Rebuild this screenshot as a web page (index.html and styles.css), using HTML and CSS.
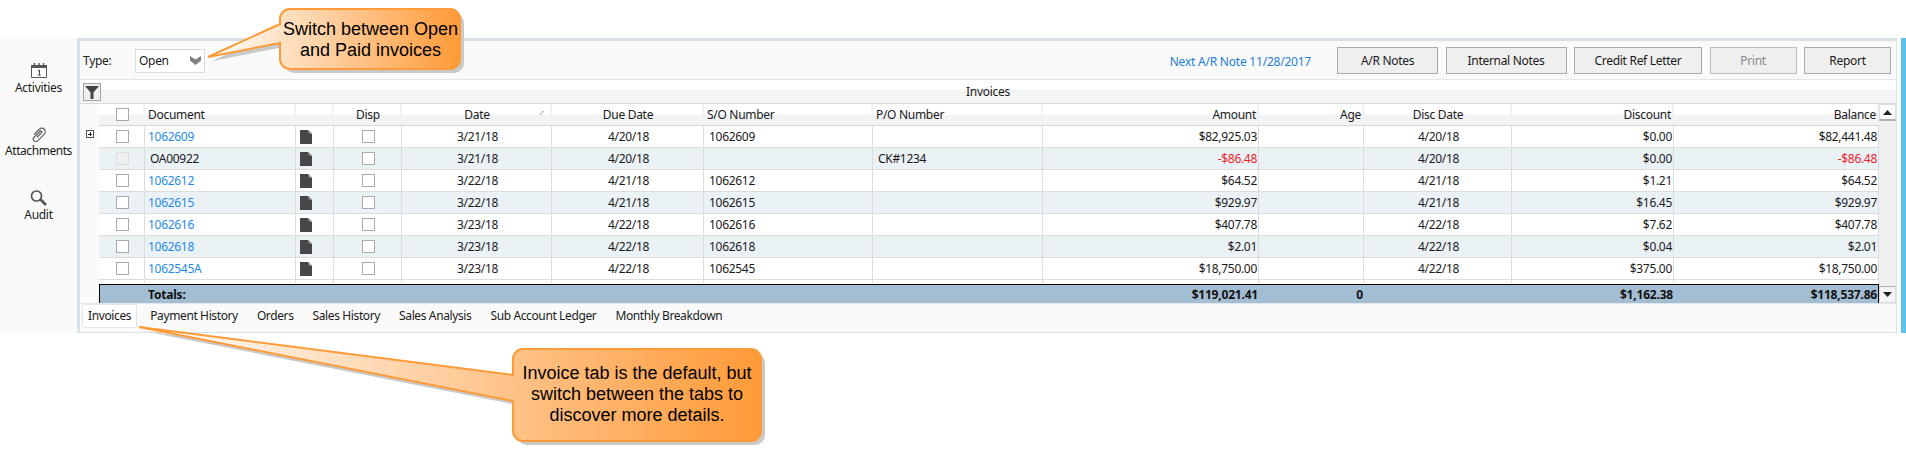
FILE: index.html
```html
<!DOCTYPE html>
<html lang="en">
<head>
<meta charset="utf-8">
<title>Invoices</title>
<link rel="stylesheet" href="styles.css">
</head>
<body>
<div class="app">
  <nav class="sidebar">
    <div class="side-item side-activities">
      <svg class="side-icon" width="18" height="17" viewBox="0 0 18 17"><path d="M1.500 3.500h15v12h-15z" fill="#fff" stroke="#555"/><path d="M1 3h16v3H1z" fill="#555"/><path d="M4.500 1v3M9 1v3M13.500 1v3" stroke="#555" stroke-width="1.400"/><path d="M8 9l1.500-1v5M7.800 13h3" fill="none" stroke="#444"/></svg>
      <span>Activities</span>
    </div>
    <div class="side-item">
      <svg class="side-icon" width="16" height="15" viewBox="0 0 16 15"><g transform="rotate(45 8 7.500)" fill="none" stroke="#666" stroke-width="1.300"><path d="M4.500 11V3.500a3.500 3.500 0 0 1 7 0V13a2.500 2.500 0 0 1-5 0V4.500a1 1 0 0 1 2 0V11"/></g></svg>
      <span class="side-attach">Attachments</span>
    </div>
    <div class="side-item">
      <svg class="side-icon" width="17" height="16" viewBox="0 0 17 16"><circle cx="6.500" cy="6" r="5" fill="none" stroke="#555" stroke-width="1.700"/><path d="M10.500 9.500 16 15" stroke="#555" stroke-width="2.600"/></svg>
      <span>Audit</span>
    </div>
  </nav>
  <main class="frame">
    <header class="toolbar">
      <label class="type-label">Type:</label>
      <div class="select">
        <span>Open</span>
        <svg width="11" height="9" viewBox="0 0 11 9"><path d="M0 0l5.500 3.500L11 0v4.500L5.500 9 0 4.500z" fill="#7f7f7f"/></svg>
      </div>
      <a class="next-note">Next A/R Note 11/28/2017</a>
      <div class="buttons">
        <button class="btn btn-ar">A/R Notes</button>
        <button class="btn btn-int">Internal Notes</button>
        <button class="btn btn-credit">Credit Ref Letter</button>
        <button class="btn btn-print" disabled>Print</button>
        <button class="btn btn-report">Report</button>
      </div>
    </header>
    <div class="titlebar">
      <button class="filter"><svg width="14" height="13" viewBox="0 0 14 13"><path d="M0 0h14L8.500 6.500V13h-3V6.500z" fill="#444"/></svg></button>
      <span class="title">Invoices</span>
    </div>
    <div class="grid-wrap">
      <div class="gutter"><span class="expander"></span></div>
      <div class="grid">
        <div class="cols head">
          <div class="c-center"><i class="check"></i></div><div>Document</div><div></div><div class="c-center">Disp</div><div class="c-center sort">Date<i class="sort-mark"></i></div><div class="c-center">Due Date</div><div>S/O Number</div><div>P/O Number</div><div class="c-right">Amount</div><div class="c-right">Age</div><div class="c-center">Disc Date</div><div class="c-right">Discount</div><div class="c-right">Balance</div>
        </div>
        <div class="cols row">
          <div class="c-center"><i class="check"></i></div><div><a class="link">1062609</a></div><div class="c-icon"><svg class="doc" width="12" height="14" viewBox="0 0 12 14"><path d="M0 0h8l4 4v10H0z" fill="#474747"/><path d="M8.500 0 12 3.500H8.500z" fill="#999"/></svg></div><div class="c-center"><i class="check"></i></div><div class="c-center">3/21/18</div><div class="c-center">4/20/18</div><div class="c-pad">1062609</div><div></div><div class="c-right">$82,925.03</div><div></div><div class="c-center">4/20/18</div><div class="c-right">$0.00</div><div class="c-right">$82,441.48</div>
        </div>
        <div class="cols row alt">
          <div class="c-center"><i class="check disabled"></i></div><div class="c-pad">OA00922</div><div class="c-icon"><svg class="doc" width="12" height="14" viewBox="0 0 12 14"><path d="M0 0h8l4 4v10H0z" fill="#474747"/><path d="M8.500 0 12 3.500H8.500z" fill="#999"/></svg></div><div class="c-center"><i class="check"></i></div><div class="c-center">3/21/18</div><div class="c-center">4/20/18</div><div></div><div class="c-pad">CK#1234</div><div class="c-right neg">-$86.48</div><div></div><div class="c-center">4/20/18</div><div class="c-right">$0.00</div><div class="c-right neg">-$86.48</div>
        </div>
        <div class="cols row">
          <div class="c-center"><i class="check"></i></div><div><a class="link">1062612</a></div><div class="c-icon"><svg class="doc" width="12" height="14" viewBox="0 0 12 14"><path d="M0 0h8l4 4v10H0z" fill="#474747"/><path d="M8.500 0 12 3.500H8.500z" fill="#999"/></svg></div><div class="c-center"><i class="check"></i></div><div class="c-center">3/22/18</div><div class="c-center">4/21/18</div><div class="c-pad">1062612</div><div></div><div class="c-right">$64.52</div><div></div><div class="c-center">4/21/18</div><div class="c-right">$1.21</div><div class="c-right">$64.52</div>
        </div>
        <div class="cols row alt">
          <div class="c-center"><i class="check"></i></div><div><a class="link">1062615</a></div><div class="c-icon"><svg class="doc" width="12" height="14" viewBox="0 0 12 14"><path d="M0 0h8l4 4v10H0z" fill="#474747"/><path d="M8.500 0 12 3.500H8.500z" fill="#999"/></svg></div><div class="c-center"><i class="check"></i></div><div class="c-center">3/22/18</div><div class="c-center">4/21/18</div><div class="c-pad">1062615</div><div></div><div class="c-right">$929.97</div><div></div><div class="c-center">4/21/18</div><div class="c-right">$16.45</div><div class="c-right">$929.97</div>
        </div>
        <div class="cols row">
          <div class="c-center"><i class="check"></i></div><div><a class="link">1062616</a></div><div class="c-icon"><svg class="doc" width="12" height="14" viewBox="0 0 12 14"><path d="M0 0h8l4 4v10H0z" fill="#474747"/><path d="M8.500 0 12 3.500H8.500z" fill="#999"/></svg></div><div class="c-center"><i class="check"></i></div><div class="c-center">3/23/18</div><div class="c-center">4/22/18</div><div class="c-pad">1062616</div><div></div><div class="c-right">$407.78</div><div></div><div class="c-center">4/22/18</div><div class="c-right">$7.62</div><div class="c-right">$407.78</div>
        </div>
        <div class="cols row alt">
          <div class="c-center"><i class="check"></i></div><div><a class="link">1062618</a></div><div class="c-icon"><svg class="doc" width="12" height="14" viewBox="0 0 12 14"><path d="M0 0h8l4 4v10H0z" fill="#474747"/><path d="M8.500 0 12 3.500H8.500z" fill="#999"/></svg></div><div class="c-center"><i class="check"></i></div><div class="c-center">3/23/18</div><div class="c-center">4/22/18</div><div class="c-pad">1062618</div><div></div><div class="c-right">$2.01</div><div></div><div class="c-center">4/22/18</div><div class="c-right">$0.04</div><div class="c-right">$2.01</div>
        </div>
        <div class="cols row">
          <div class="c-center"><i class="check"></i></div><div><a class="link">1062545A</a></div><div class="c-icon"><svg class="doc" width="12" height="14" viewBox="0 0 12 14"><path d="M0 0h8l4 4v10H0z" fill="#474747"/><path d="M8.500 0 12 3.500H8.500z" fill="#999"/></svg></div><div class="c-center"><i class="check"></i></div><div class="c-center">3/23/18</div><div class="c-center">4/22/18</div><div class="c-pad">1062545</div><div></div><div class="c-right">$18,750.00</div><div></div><div class="c-center">4/22/18</div><div class="c-right">$375.00</div><div class="c-right">$18,750.00</div>
        </div>
        <div class="cols stub"><div></div><div></div><div></div><div></div><div></div><div></div><div></div><div></div><div></div><div></div><div></div><div></div><div></div></div>
        <div class="cols totals">
          <div></div><div>Totals:</div><div></div><div></div><div></div><div></div><div></div><div></div><div class="c-right">$119,021.41</div><div class="c-right">0</div><div></div><div class="c-right">$1,162.38</div><div class="c-right">$118,537.86</div>
        </div>
      </div>
      <div class="scrollbar">
        <div class="sb-btn sb-up"><svg width="9" height="5" viewBox="0 0 9 5"><path d="M0 5h9L4.500 0z" fill="#222"/></svg></div>
        <div class="sb-track"></div>
        <div class="sb-btn sb-down"><svg width="9" height="5" viewBox="0 0 9 5"><path d="M0 0h9L4.500 5z" fill="#222"/></svg></div>
      </div>
    </div>
    <div class="tabs">
      <div class="tab active">Invoices</div>
      <div class="tab">Payment History</div>
      <div class="tab">Orders</div>
      <div class="tab">Sales History</div>
      <div class="tab">Sales Analysis</div>
      <div class="tab">Sub Account Ledger</div>
      <div class="tab">Monthly Breakdown</div>
    </div>
  </main>
  <div class="edge"></div>
</div>

<div class="callout callout-type">
  <svg width="262" height="68" viewBox="0 0 262 68">
    <defs><linearGradient id="fillA" x1="0" x2="1" y1="0" y2="0"><stop offset="0" stop-color="#fff"/><stop offset="1" stop-color="#ff9a38"/></linearGradient></defs>
    <path class="shadow" transform="translate(4 4)" d="M1 49 73 16V11a10 10 0 0 1 10-10h160a10 10 0 0 1 10 10v40a10 10 0 0 1-10 10H83a10 10 0 0 1-10-10V35z"/>
    <path d="M1 49 73 16V11a10 10 0 0 1 10-10h160a10 10 0 0 1 10 10v40a10 10 0 0 1-10 10H83a10 10 0 0 1-10-10V35z" fill="url(#fillA)" stroke="#ff9a38" stroke-width="2"/>
  </svg>
  <p class="callout-text">Switch between Open<br>and Paid invoices</p>
</div>

<div class="callout callout-tabs">
  <svg width="632" height="122" viewBox="0 0 632 122">
    <defs><linearGradient id="fillB" x1="0" x2="1" y1="0" y2="0"><stop offset="0" stop-color="#fff"/><stop offset="1" stop-color="#ff9a38"/></linearGradient></defs>
    <path class="shadow" transform="translate(4 4)" d="M1 1 375 49V33a10 10 0 0 1 10-10h228a10 10 0 0 1 10 10v72a10 10 0 0 1-10 10H385a10 10 0 0 1-10-10V75z"/>
    <path d="M1 1 375 49V33a10 10 0 0 1 10-10h228a10 10 0 0 1 10 10v72a10 10 0 0 1-10 10H385a10 10 0 0 1-10-10V75z" fill="url(#fillB)" stroke="#ff9a38" stroke-width="2"/>
  </svg>
  <p class="callout-text">Invoice tab is the default, but<br>switch between the tabs to<br>discover more details.</p>
</div>
</body>
</html>
```
FILE: styles.css
```css
* { box-sizing: border-box; }
html, body { margin: 0; padding: 0; background: #fff; }
body {
  position: relative;
  width: 1906px;
  height: 454px;
  overflow: hidden;
  padding-top: 38px;
  font-family: "Noto Sans", "Open Sans", sans-serif;
  font-size: 12px;
  letter-spacing: -0.3px;
  color: #1a1a1a;
}
.app { display: flex; height: 295px; }
.sidebar {
  width: 77px;
  background: #fafafa;
  display: flex;
  flex-direction: column;
  align-items: center;
  padding-top: 24px;
  gap: 31px;
}
.side-item { display: flex; flex-direction: column; align-items: center; gap: 1px; line-height: 16px; width: 77px; }
.side-item span { display: block; }
.side-attach { letter-spacing: -0.45px; }
.side-icon { display: block; }
.frame {
  flex: 0 0 1820px;
  border: 3px solid #d9e1e8;
  border-width: 3px 1px 1px 3px;
  background: #fafafa;
  display: flex;
  flex-direction: column;
}
.edge { flex: 0 0 5px; margin-left: 4px; background: #5cc3ea; }
.toolbar {
  height: 39px;
  display: flex;
  align-items: center;
  padding: 0 5px 0 3px;
  border-bottom: 1px solid #e0e5e9;
  background: #fafafa;
}
.type-label { width: 52px; }
.select {
  width: 70px;
  height: 24px;
  margin-top: 1px;
  border: 1px solid #d5e0e6;
  background: #fff;
  display: flex;
  align-items: center;
  justify-content: space-between;
  padding: 0 3px 0 3px;
}
.next-note { margin-left: auto; color: #1f7fd6; margin-right: 26px; margin-top: 3px; letter-spacing: -0.22px; }
.buttons { display: flex; gap: 7.5px; }
.btn {
  height: 27px;
  border: 1px solid #a9a9a9;
  background: #efefef;
  font: inherit;
  letter-spacing: inherit;
  color: #1a1a1a;
  padding: 0;
}
.btn-ar { width: 101px; }
.btn-int { width: 121px; }
.btn-credit { width: 128px; }
.btn-print { width: 87px; color: #8a8a8a; border-color: #bdbdbd; }
.btn-report { width: 87px; }
.titlebar {
  height: 24px;
  display: flex;
  align-items: center;
  justify-content: center;
  position: relative;
  background: linear-gradient(#fff 0, #fff 9px, #f3f4f6 10px, #f3f4f6 100%);
  border-bottom: 1px solid #d9d9d9;
}
.filter {
  position: absolute;
  left: 3px;
  top: 3px;
  width: 18px;
  height: 18px;
  padding: 0;
  border: 1px solid #a5a5a5;
  background: #efefef;
  display: flex;
  align-items: center;
  justify-content: center;
}
.grid-wrap { display: flex; height: 199px; background: #fafafa; }
.gutter { width: 19px; padding: 26px 0 0 6px; }
.expander {
  display: block;
  width: 8px;
  height: 8px;
  border: 1px solid #555;
  background: #fff;
  background-image: linear-gradient(#222, #222), linear-gradient(#222, #222);
  background-size: 4px 1px, 1px 4px;
  background-position: center, center;
  background-repeat: no-repeat;
}
.grid { width: 1780px; background: #fff; }
.cols {
  display: grid;
  grid-template-columns: 46px 151px 38px 68px 150px 152px 169px 170px 216px 105px 148px 162px 205px;
}
.cols > div {
  border-right: 1px solid #dcdcdc;
  display: flex;
  align-items: center;
  padding: 0 1px 0 3px;
  white-space: nowrap;
  overflow: hidden;
}
.c-center { justify-content: center; }
.c-right { justify-content: flex-end; }
.c-pad { padding-left: 5px !important; }
.c-icon { padding-left: 4px !important; }
.head { height: 22px; background: linear-gradient(#fff 0, #fff 10px, #f2f3f5 11px, #f2f3f5 100%); border-bottom: 1px solid #d6d6d6; }
.head > div { border-right: 2px solid #f2f2f2; }
.sort { position: relative; }
.sort-mark {
  position: absolute;
  right: 6px;
  top: 6px;
  width: 5px;
  height: 5px;
  background: linear-gradient(135deg, transparent 50%, #aaa 50%, transparent 75%);
}
.row { height: 22px; border-bottom: 1px solid #dcdcdc; background: #fff; }
.row.alt { background: #ebf2f6; }
.stub { height: 3px; }
.check { display: block; width: 13px; height: 13px; border: 1px solid #aaa; background: #fff; }
.check.disabled { background: #eee; border-color: #ddd; }
.link { color: #1f8ae6; }
.neg { color: #e8232a; }
.doc { display: block; }
.totals {
  grid-template-columns: 45px 151px 38px 68px 150px 152px 169px 170px 216px 105px 148px 162px 204px;
  height: 20px;
  margin-top: 1px;
  border: 1px solid #000;
  background: #a3bdd3;
  font-weight: 700;
  color: #111;
  letter-spacing: -0.2px;
}
.totals > div { border: 0; }
.scrollbar { width: 17px; background: #f0f0f0; display: flex; flex-direction: column; }
.sb-btn { height: 17px; display: flex; align-items: center; justify-content: center; border: 1px solid #dcdcdc; }
.sb-up { background: #fff; border-bottom: 2px solid #aeaeae; }
.sb-down { background: #f5f5f5; border-top: 1px solid #aeaeae; }
.sb-track { flex: 1; }
.tabs { display: flex; height: 25px; padding-left: 2px; align-items: stretch; border-top: 1px solid #e4e8ec; letter-spacing: -0.38px; }
.tab { padding: 3px 10px 0 9px; line-height: 17px; }
.tab.active { background: #fff; border: 1px solid #e1e6ea; border-radius: 2px; padding: 2px 5px 0 5px; margin-right: 4px; }
.callout { position: absolute; }
.callout svg { display: block; }
.shadow { fill: #c9c9c9; }
.callout-type { left: 207px; top: 8px; width: 262px; height: 68px; }
.callout-tabs { left: 138px; top: 326px; width: 632px; height: 122px; }
.callout-text {
  position: absolute;
  margin: 0;
  font-family: "Liberation Sans", Arial, sans-serif;
  font-size: 18px;
  line-height: 21px;
  letter-spacing: 0;
  text-align: center;
  color: #000;
  white-space: nowrap;
}
.callout-type .callout-text { left: 73px; width: 181px; top: 11px; }
.callout-tabs .callout-text { left: 375px; width: 248px; top: 37px; }
```
